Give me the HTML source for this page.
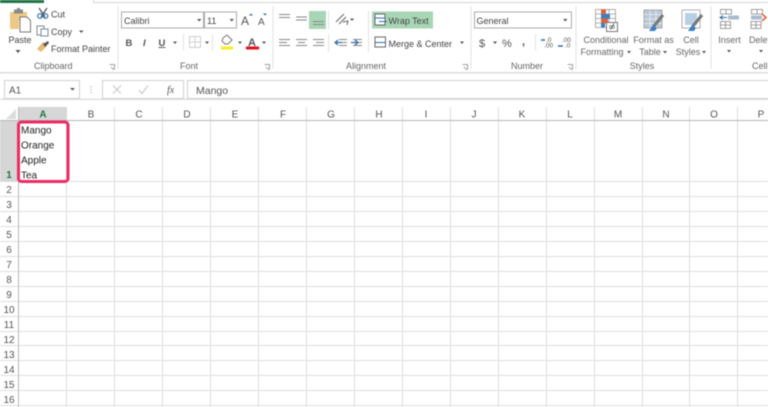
<!DOCTYPE html>
<html><head><meta charset="utf-8"><style>
html,body{margin:0;padding:0;background:#fff;width:768px;height:407px;overflow:hidden}
svg{display:block;filter:blur(0.4px)}
text{font-family:"Liberation Sans",sans-serif;font-size:9px;fill:#444}
.c text,text.h{font-size:10px;fill:#555;text-anchor:middle}
.g{fill:#666;text-anchor:middle;font-size:9px}
.cell{font-size:10px;fill:#222}
.arr{fill:#555}
</style></head><body>
<svg width="768" height="407" viewBox="0 0 768 407" xmlns="http://www.w3.org/2000/svg">
<rect width="768" height="407" fill="#fff"/>
<!-- top -->
<rect x="0" y="0" width="44" height="3" fill="#217346"/>
<rect x="93" y="2" width="675" height="1" fill="#d4d4d4"/>
<rect x="93" y="0" width="1" height="3" fill="#d4d4d4"/>
<rect x="0" y="72" width="768" height="1.5" fill="#dcdcdc"/>
<rect x="0" y="98.600" width="768" height="1.400" fill="#dedede"/>
<!-- group separators -->
<g fill="#e2e2e2"><rect x="117.500" y="6" width="1" height="63"/><rect x="272.500" y="6" width="1" height="63"/><rect x="470.500" y="6" width="1" height="63"/><rect x="575.500" y="6" width="1" height="63"/><rect x="710.500" y="6" width="1" height="63"/>
<rect x="328" y="11" width="1" height="18"/><rect x="328" y="34" width="1" height="18"/><rect x="368" y="11" width="1" height="41"/><rect x="183" y="34" width="1" height="17"/><rect x="212" y="34" width="1" height="17"/><rect x="535" y="34" width="1" height="17"/></g>
<!-- paste -->
<path d="M10 12h17v9h-8v8h-9z" fill="#edc984"/>
<rect x="14" y="9.500" width="9" height="4" fill="#8a8a8a"/><rect x="17" y="8" width="3" height="3" fill="#8a8a8a"/>
<path d="M20 17h7l3.500 3.500V32H20z" fill="#fff" stroke="#777"/>
<text x="8.500" y="43">Paste</text>
<path d="M15.500 50h5l-2.500 3z" class="arr"/>
<!-- cut -->
<path d="M39 8l6 9M47 8l-6 9" stroke="#555" stroke-width="1.300" fill="none"/><circle cx="40" cy="16" r="2.300" fill="none" stroke="#2f6fa8" stroke-width="1.200"/><circle cx="45.500" cy="16" r="2.300" fill="none" stroke="#2f6fa8" stroke-width="1.200"/>
<text x="51" y="17.500">Cut</text>
<!-- copy -->
<rect x="37" y="26" width="7" height="9" fill="#fff" stroke="#888"/><rect x="41" y="29" width="7" height="7" fill="#fff" stroke="#6d8aa6"/>
<text x="51" y="35">Copy</text>
<path d="M79 30.500h4.500l-2.250 2.500z" class="arr"/>
<!-- format painter -->
<path d="M37 49l6-7 4 4-6 6z" fill="#e3bd74"/><path d="M43 44l5-3 1 2-4 4z" fill="#555"/>
<text x="51" y="52">Format Painter</text>
<text x="34" y="69" style="fill:#666">Clipboard</text>
<path d="M109.500 64.500h5v5M111 67l3 3" stroke="#888" fill="none" stroke-width=".8"/>
<!-- font -->
<rect x="121.500" y="12" width="82" height="16" fill="#fff" stroke="#aaa"/>
<rect x="204.500" y="12" width="32" height="16" fill="#fff" stroke="#aaa"/>
<text x="124" y="24">Calibri</text><text x="207" y="24">11</text>
<path d="M197 19h4.500l-2.250 2.500zM229.500 19h4.500l-2.250 2.500z" class="arr"/>
<text x="241" y="25" style="font-size:12px;fill:#555">A</text><text x="258" y="25" style="font-size:10px;fill:#555">A</text>
<path d="M249 15.500l2-2 2 2zM263 13.500l2 2 2-2z" fill="#2f6fa8"/>
<text x="125.500" y="46" style="font-weight:bold;font-size:9.500px;fill:#555">B</text>
<text x="143" y="46" style="font-style:italic;font-weight:bold;font-size:9.500px;fill:#555">I</text>
<text x="158.500" y="46" style="font-weight:bold;font-size:9.500px;fill:#555;text-decoration:underline">U</text>
<path d="M173 41.500h4l-2 2.500zM205 41.500h4l-2 2.500zM238 41.500h4l-2 2.500zM262 41.500h4l-2 2.500z" class="arr"/>
<path d="M189.500 36.500h11v11h-11zM195 36.500v11M189.500 42h11" fill="none" stroke="#bbb" stroke-dasharray="1.500 .7"/>
<path d="M223 38l4-3 5 5-4 4h-3l-3-3z" fill="#fff" stroke="#777"/><rect x="221" y="46.500" width="12" height="3" fill="#f6ef1a"/>
<text x="248" y="46" style="font-weight:bold;font-size:11px;fill:#555">A</text><rect x="246" y="46.500" width="13" height="3" fill="#e3101c"/>
<text x="180" y="69" style="fill:#666">Font</text>
<path d="M264.500 64.500h5v5M266 67l3 3" stroke="#888" fill="none" stroke-width=".8"/>
<!-- alignment -->
<rect x="309" y="11" width="17" height="18" fill="#a7d6b5"/>
<g stroke="#888" stroke-width="1"><path d="M279 14.500h11M279 17.500h11M296 17h11M296 20h11M313 21.500h11M313 24.500h11" fill="none"/>
<path d="M279 39.500h11M279 42.500h8M279 45.500h11M296 39.500h11M298 42.500h7M296 45.500h11M313 39.500h11M316 42.500h8M313 45.500h11M339 39.500h8M339 42.500h8M339 45.500h8M353 39.500h9M353 42.500h9M353 45.500h9" fill="none"/></g>
<path d="M335 42.500h7M338 40l-3 2.500 3 2.500M351 42.500h7M355 40l3 2.500-3 2.500" stroke="#2f6fa8" stroke-width="1.200" fill="none"/>
<path d="M336 22l8-8M339 24l7-7M343 22l5-1-1 4" stroke="#666" fill="none"/>
<path d="M350 18.500h4l-2 2.500z" class="arr"/>
<rect x="372" y="11.500" width="61" height="17" fill="#a7d6b5"/>
<rect x="375" y="14" width="10" height="11" fill="#fff" stroke="#666"/><path d="M375 18h10M379 21.500h8" stroke="#2f6fa8" fill="none"/>
<text x="388.500" y="24">Wrap Text</text>
<rect x="375" y="37" width="10.500" height="10" fill="#fff" stroke="#666"/><path d="M375 42.500h10.500" stroke="#2f6fa8"/>
<text x="388.500" y="47">Merge &amp; Center</text>
<path d="M460 41.500h4l-2 2.500z" class="arr"/>
<text x="346" y="69" style="fill:#666">Alignment</text>
<path d="M462.500 64.500h5v5M464 67l3 3" stroke="#888" fill="none" stroke-width=".8"/>
<!-- number -->
<rect x="474.500" y="12" width="97" height="16" fill="#fff" stroke="#aaa"/>
<text x="476.500" y="24">General</text>
<path d="M563 19h4.500l-2.250 2.500z" class="arr"/>
<text x="479" y="47" style="font-size:11px;fill:#555">$</text>
<path d="M493 41.500h4l-2 2.500z" class="arr"/>
<text x="502" y="47" style="font-size:11px;fill:#555">%</text>
<text x="522" y="45" style="font-size:11px;font-weight:bold;fill:#555">,</text>
<text x="546" y="42" style="font-size:6.500px;fill:#555">.0</text><text x="544" y="47.500" style="font-size:6.500px;fill:#555">.00</text>
<text x="562" y="42" style="font-size:6.500px;fill:#555">.00</text><text x="565" y="47.500" style="font-size:6.500px;fill:#555">.0</text>
<path d="M541 40h4M558 46h5" stroke="#2f6fa8" stroke-width="1.500"/>
<text x="527" y="69" style="fill:#666;text-anchor:middle">Number</text>
<path d="M567.500 64.500h5v5M569 67l3 3" stroke="#888" fill="none" stroke-width=".8"/>
<!-- conditional formatting -->
<g fill="none" stroke="#999" stroke-width=".8"><rect x="595.500" y="9.500" width="20" height="18"/><path d="M595.500 14h20M595.500 18.500h20M595.500 23h20M602 9.500v18M609 9.500v18"/></g>
<rect x="601" y="9.500" width="5" height="4.500" fill="#e2603c"/><rect x="601" y="14" width="9" height="4.500" fill="#3d7fc1"/><rect x="601" y="18.500" width="7" height="4.500" fill="#e2603c"/><rect x="601" y="23" width="4" height="4.500" fill="#3d7fc1"/>
<rect x="606.500" y="22.500" width="11" height="9" fill="#fff" stroke="#777"/>
<path d="M609 26h6M609 28h6M614 23.500l-3.500 6" stroke="#555" stroke-width=".8" fill="none"/>
<text class="g" x="606" y="43">Conditional</text>
<text class="g" x="602" y="55">Formatting</text>
<path d="M627 51h4l-2 2.500zM663 51h4l-2 2.500zM702 51h4l-2 2.500z" class="arr"/>
<!-- format as table -->
<rect x="644" y="10" width="18" height="18" fill="#b9c8d8" stroke="#999" stroke-width=".8"/>
<path d="M644 14.500h18M644 19h18M644 23.500h18M650 10v18M656 10v18" stroke="#eee" stroke-width=".7"/>
<path d="M663 15l-9 11" stroke="#777" stroke-width="3"/><path d="M649 31l4-6 4 3-2 3z" fill="#3d7fc1"/>
<text class="g" x="653.500" y="43">Format as</text>
<text class="g" x="650" y="55">Table</text>
<!-- cell styles -->
<rect x="682" y="10" width="18" height="18" fill="#fff" stroke="#999" stroke-width=".8"/><rect x="685" y="13" width="12" height="12" fill="#b8cfe6"/>
<path d="M702 15l-9 11" stroke="#777" stroke-width="3"/><path d="M688 31l4-6 4 3-2 3z" fill="#3d7fc1"/>
<text class="g" x="691" y="43">Cell</text>
<text class="g" x="688" y="55">Styles</text>
<text x="642" y="69" style="fill:#666;text-anchor:middle">Styles</text>
<!-- insert -->
<g fill="none" stroke="#888" stroke-width=".8"><rect x="720.500" y="9.500" width="11" height="4.500"/><path d="M726 9.500v4.500"/><rect x="720.500" y="21.500" width="10" height="7"/><path d="M725.500 21.500v7M720.500 25h10"/><rect x="751.500" y="9.500" width="11" height="4.500"/><path d="M757 9.500v4.500"/><rect x="751" y="21.500" width="10" height="7"/><path d="M756 21.500v7M751 25h10"/></g>
<rect x="728" y="15.500" width="11" height="4" fill="#a9bbcf"/><path d="M720 17.500h7M723 15.500l-3 2 3 2" stroke="#2f6fa8" fill="none"/>
<rect x="751" y="15.500" width="11" height="4" fill="#a9bbcf"/><path d="M762 14l4 3.500-4 3.500" stroke="#e2603c" stroke-width="1.500" fill="none"/>
<text class="g" x="729.500" y="43">Insert</text>
<text class="g" x="749" y="43" style="text-anchor:start">Delete</text>
<path d="M727 50h4l-2 2.500zM759 50h4l-2 2.500z" class="arr"/>
<text x="752" y="69" style="fill:#666">Cells</text>
<!-- formula bar -->
<rect x="4.500" y="80.500" width="75" height="18" fill="#fff" stroke="#d0d0d0"/>
<text x="9" y="93.500" style="font-size:10px;fill:#555">A1</text>
<path d="M70 88h5l-2.500 2.500z" class="arr"/>
<path d="M91 86v1M91 89v1M91 92v1" stroke="#999"/>
<rect x="102.500" y="80.500" width="81" height="18" fill="#fff" stroke="#d0d0d0"/>
<rect x="187.500" y="80.500" width="581" height="18" fill="#fff" stroke="#d0d0d0"/>
<path d="M113 85.500l8 8M121 85.500l-8 8" stroke="#ccc" stroke-width="1.200"/>
<path d="M139 90l3 3.500 6-8" stroke="#ccc" stroke-width="1.200" fill="none"/>
<text x="167" y="93" style="font-family:'Liberation Serif',serif;font-style:italic;font-size:10px;fill:#555">fx</text>
<text x="196" y="94" style="font-size:10.500px;fill:#555">Mango</text>
<!-- grid -->
<g fill="none" stroke="#dfdfdf" stroke-width="1">
<path d="M18.500 107V407M66.500 107V407M114.500 107V407M162.500 107V407M210.500 107V407M258.500 107V407M306.500 107V407M354.500 107V407M402.500 107V407M450.500 107V407M498.500 107V407M546.500 107V407M594.500 107V407M642.500 107V407M689.500 107V407M737.500 107V407"/>
<path d="M0 181.500H768M0 196.500H768M0 211.500H768M0 226.500H768M0 241.500H768M0 256.500H768M0 271.500H768M0 286.500H768M0 301.500H768M0 316.500H768M0 331.500H768M0 345.500H768M0 360.500H768M0 375.500H768M0 390.500H768M0 405.500H768"/>
</g>
<rect x="19" y="107" width="48" height="13.500" fill="#d6d6d6"/>
<rect x="0" y="121" width="18.500" height="60.500" fill="#d6d6d6"/>
<rect x="0" y="120" width="768" height="1" fill="#b5b5b5"/>
<rect x="18" y="107" width="1" height="300" fill="#bbb"/>
<path d="M16 109v10H6z" fill="#dcdcdc"/>
<text x="43" y="117.500" style="font-size:10px;font-weight:bold;fill:#217346;text-anchor:middle">A</text>
<g class="c">
<text x="91" y="117.500">B</text><text x="139" y="117.500">C</text><text x="187" y="117.500">D</text><text x="235" y="117.500">E</text><text x="283" y="117.500">F</text><text x="331" y="117.500">G</text><text x="379" y="117.500">H</text><text x="426" y="117.500">I</text><text x="474" y="117.500">J</text><text x="522" y="117.500">K</text><text x="570" y="117.500">L</text><text x="618" y="117.500">M</text><text x="666" y="117.500">N</text><text x="714" y="117.500">O</text><text x="761" y="117.500">P</text>
</g>
<text x="9" y="178" style="font-size:10px;font-weight:bold;fill:#217346;text-anchor:middle">1</text>
<g class="c">
<text x="9" y="193">2</text><text x="9" y="208">3</text><text x="9" y="223">4</text><text x="9" y="238">5</text><text x="9" y="253">6</text><text x="9" y="268">7</text><text x="9" y="283">8</text><text x="9" y="298">9</text><text x="9" y="313">10</text><text x="9" y="328">11</text><text x="9" y="343">12</text><text x="9" y="358">13</text><text x="9" y="373">14</text><text x="9" y="388">15</text><text x="9" y="403">16</text>
</g>
<!-- cells -->
<text class="cell" x="21" y="133.500">Mango</text>
<text class="cell" x="21" y="148.500">Orange</text>
<text class="cell" x="21" y="163.500">Apple</text>
<text class="cell" x="21" y="178.500">Tea</text>
<rect x="18.500" y="122" width="49.500" height="59.500" rx="3" fill="none" stroke="#ee2a63" stroke-width="3"/>
</svg>
</body></html>
